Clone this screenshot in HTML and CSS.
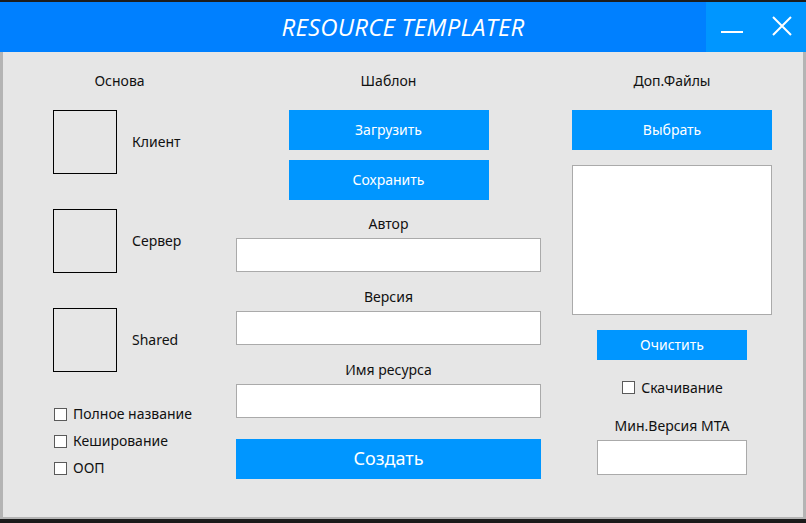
FILE: index.html
```html
<!DOCTYPE html>
<html lang="ru">
<head>
<meta charset="utf-8">
<title>Resource Templater</title>
<link rel="stylesheet" href="styles.css">
</head>
<body>
<div class="window">
  <div class="topline"></div>
  <header class="titlebar">
    <div class="title">RESOURCE TEMPLATER</div>
    <div class="controls">
      <button class="ctrl" aria-label="Свернуть">
        <svg width="22" height="2" viewBox="0 0 22 2"><rect x="0" y="0" width="22" height="2" fill="#fff"/></svg>
      </button>
      <button class="ctrl" aria-label="Закрыть">
        <svg width="20" height="20" viewBox="0 0 20 20"><path d="M1 1 L19 19 M19 1 L1 19" stroke="#fff" stroke-width="2" fill="none"/></svg>
      </button>
    </div>
  </header>
  <main class="content">
    <section class="col col-base">
      <div class="label">Основа</div>
      <div class="slots">
        <div class="slot"><div class="dropbox"></div><span>Клиент</span></div>
        <div class="slot"><div class="dropbox"></div><span>Сервер</span></div>
        <div class="slot"><div class="dropbox"></div><span>Shared</span></div>
      </div>
      <div class="checks">
        <label class="check"><span class="cb"></span>Полное название</label>
        <label class="check"><span class="cb"></span>Кеширование</label>
        <label class="check"><span class="cb"></span>ООП</label>
      </div>
    </section>
    <section class="col col-tpl">
      <div class="label">Шаблон</div>
      <div class="btn btn-200 first">Загрузить</div>
      <div class="btn btn-200 second">Сохранить</div>
      <div class="label field-label l1">Автор</div>
      <div class="input"></div>
      <div class="label field-label">Версия</div>
      <div class="input"></div>
      <div class="label field-label">Имя ресурса</div>
      <div class="input"></div>
      <div class="btn btn-create">Создать</div>
    </section>
    <section class="col col-files">
      <div class="label">Доп.Файлы</div>
      <div class="btn btn-200 first">Выбрать</div>
      <div class="listbox"></div>
      <div class="btn btn-clear">Очистить</div>
      <label class="check check-dl"><span class="cb"></span>Скачивание</label>
      <div class="label mta-label">Мин.Версия МТА</div>
      <div class="input input-mta"></div>
    </section>
  </main>
  <div class="bottomline"></div>
</div>
</body>
</html>
```
FILE: styles.css
```css
* { box-sizing: border-box; }
html, body { margin: 0; padding: 0; }
body {
  width: 806px;
  height: 523px;
  overflow: hidden;
  font-family: "Noto Sans", "Open Sans", sans-serif;
  font-size: 14px;
  color: #111;
  background: #1a1a1a;
}
.window {
  width: 806px;
  height: 523px;
  display: flex;
  flex-direction: column;
}
.topline { height: 2px; background: #1c1c1c; }
.titlebar {
  height: 50px;
  background: #0080ff;
  display: flex;
}
.title {
  flex: 1;
  display: flex;
  align-items: center;
  justify-content: center;
  padding-left: 100px;
  color: #fff;
  font-family: "Open Sans", "Noto Sans", sans-serif;
  font-style: italic;
  font-size: 24px;
  letter-spacing: 0.2px;
  padding-bottom: 1px;
}
.controls {
  display: flex;
  background: #0096ff;
}
.ctrl {
  width: 50px;
  height: 50px;
  border: 0;
  padding: 0;
  margin: 0;
  background: transparent;
  display: flex;
  align-items: center;
  justify-content: center;
}
.ctrl:first-child svg { margin-top: 10px; margin-left: 2px; }
.ctrl:last-child svg { margin-left: 2px; margin-bottom: 3px; }
.content {
  height: 467px;
  background: #e6e6e6;
  border-left: 3px solid #b4b4b4;
  border-right: 3px solid #b4b4b4;
  border-bottom: 2px solid #b4b4b4;
  display: flex;
  padding-left: 50px;
  padding-top: 19px;
}
.bottomline { height: 2px; background: #1c1c1c; }
.col { display: flex; flex-direction: column; }
.label { height: 20px; line-height: 19px; text-align: center; white-space: nowrap; }
.col-base { width: 183px; }
.col-base > .label { width: 133px; }
.slots { margin-top: 19px; display: flex; flex-direction: column; gap: 35px; }
.slot { display: flex; align-items: center; height: 64px; }
.dropbox { width: 64px; height: 64px; border: 1px solid #000; }
.slot span { margin-left: 15px; padding-bottom: 2px; }
.checks { margin-top: 28px; display: flex; flex-direction: column; }
.check {
  display: flex;
  align-items: center;
  height: 27px;
  white-space: nowrap;
}
.cb {
  width: 13px;
  height: 13px;
  border: 1px solid #5a5a5a;
  background: #fff;
  margin-left: 1px;
  margin-right: 6px;
  margin-top: 1px;
  flex: none;
}
.col-tpl { width: 305px; }
.btn {
  background: #0096ff;
  color: #fff;
  display: flex;
  align-items: center;
  justify-content: center;
  white-space: nowrap;
  padding-bottom: 2px;
}
.btn-200 { width: 200px; height: 40px; align-self: center; }
.first { margin-top: 19px; }
.second { margin-top: 10px; }
.field-label { margin-top: 15px; }
.l1 { margin-top: 14px; }
.input {
  margin-top: 4px;
  height: 34px;
  background: #fff;
  border: 1px solid #aaa;
}
.btn-create { margin-top: 21px; height: 40px; font-size: 18px; }
.col-files { width: 200px; margin-left: 31px; }
.listbox {
  margin-top: 15px;
  height: 150px;
  background: #fff;
  border: 1px solid #aaa;
}
.btn-clear { width: 150px; height: 30px; margin-top: 15px; align-self: center; }
.check-dl { height: 20px; margin-top: 17px; justify-content: center; }
.mta-label { margin-top: 19px; }
.input-mta { width: 150px; height: 35px; align-self: center; }
```
